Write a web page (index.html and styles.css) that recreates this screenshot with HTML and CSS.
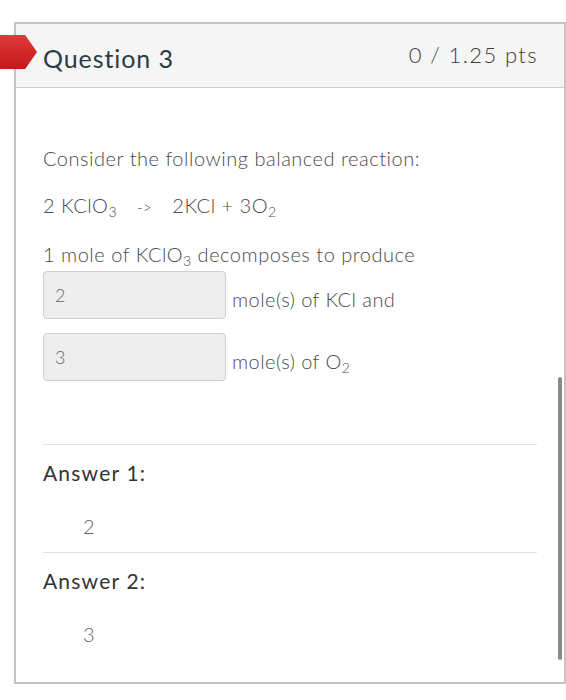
FILE: index.html
```html
<!DOCTYPE html>
<html>
<head>
<meta charset="utf-8">
<link rel="stylesheet" href="styles.css">
</head>
<body>
<div class="page">
  <div class="flag"></div>
  <div class="card">
    <div class="header">
      <span class="title">Question 3</span>
      <span class="pts">0 / 1.25 pts</span>
    </div>
    <div class="body">
      <p class="para first">Consider the following balanced reaction:</p>
      <p class="para">2 KClO<sub>3</sub> <span class="arrow">-&gt;</span> 2KCl + 3O<sub>2</sub></p>
      <p class="para">1 mole of KClO<sub>3</sub> decomposes to produce</p>
      <div class="row">
        <div class="box">2</div>
        <span class="label">mole(s) of KCl and</span>
      </div>
      <div class="row second">
        <div class="box">3</div>
        <span class="label">mole(s) of O<sub>2</sub></span>
      </div>
      <div class="answer">
        <div class="ans-title">Answer 1:</div>
        <div class="ans-value">2</div>
      </div>
      <div class="answer">
        <div class="ans-title">Answer 2:</div>
        <div class="ans-value">3</div>
      </div>
    </div>
  </div>
  <div class="scrollbar"></div>
</div>
</body>
</html>
```
FILE: styles.css
```css
html, body {
  margin: 0;
  padding: 0;
  background: #ffffff;
}
body {
  font-family: Lato, "Open Sans", sans-serif;
  font-weight: 300;
  color: #4a4a4a;
}
.page {
  position: relative;
  padding: 22px 0 0 14px;
}
.card {
  width: 548px;
  height: 658px;
  border: 2px solid #c4c4c4;
  box-sizing: content-box;
}
.header {
  height: 63px;
  background: #f5f5f5;
  border-bottom: 1px solid #c7cdd1;
  display: flex;
  justify-content: space-between;
  align-items: center;
  padding: 0 26px 0 27px;
}
.title {
  font-size: 25px;
  font-weight: 400;
  letter-spacing: 0.9px;
  color: #2d3b45;
  padding-top: 4px;
}
.pts {
  font-size: 22px;
  font-weight: 300;
  letter-spacing: 1.4px;
  color: #3d3d3d;
  padding-bottom: 2px;
}
.flag {
  position: absolute;
  left: 0;
  top: 35px;
  width: 37px;
  height: 34px;
  background: linear-gradient(#e03a3a, #c3191c);
  clip-path: polygon(0 0, 68% 0, 100% 50%, 68% 100%, 0 100%);
}
.body {
  padding: 0 26px 0 27px;
}
.para {
  margin: 0;
  font-size: 20px;
  letter-spacing: 0.52px;
  line-height: 24px;
  color: #4a4a4a;
  margin-top: 23px;
}
.para.first {
  margin-top: 58px;
}
sub {
  font-size: 14px;
  vertical-align: -4px;
  line-height: 0;
}
.arrow {
  font-size: 15px;
  margin: 0 14px 0 14px;
}
.row {
  display: flex;
  align-items: flex-end;
  margin-top: 5px;
}
.row.second {
  margin-top: 14px;
}
.box {
  width: 170px;
  height: 46px;
  background: #eeeeee;
  border: 1px solid #cfcfcf;
  border-radius: 4px;
  font-size: 18px;
  color: #666666;
  display: flex;
  align-items: center;
  padding-left: 11px;
  margin-right: 6px;
}
.label {
  font-size: 20px;
  letter-spacing: 0.45px;
  color: #4a4a4a;
  line-height: 24px;
  padding-bottom: 8px;
}
.answer {
  border-top: 1px solid #e3e3e3;
  width: 494px;
}
.row.second + .answer {
  margin-top: 63px;
}
.ans-title {
  font-size: 21px;
  font-weight: 400;
  letter-spacing: 1.2px;
  color: #333333;
  margin-top: 16px;
  line-height: 24px;
}
.ans-value {
  font-size: 20px;
  color: #666666;
  padding-left: 40px;
  margin-top: 29px;
  line-height: 24px;
  height: 38px;
}
.scrollbar {
  position: absolute;
  left: 558px;
  top: 377px;
  width: 4px;
  height: 283px;
  background: #8a8a8a;
  border-radius: 2px;
}
```
